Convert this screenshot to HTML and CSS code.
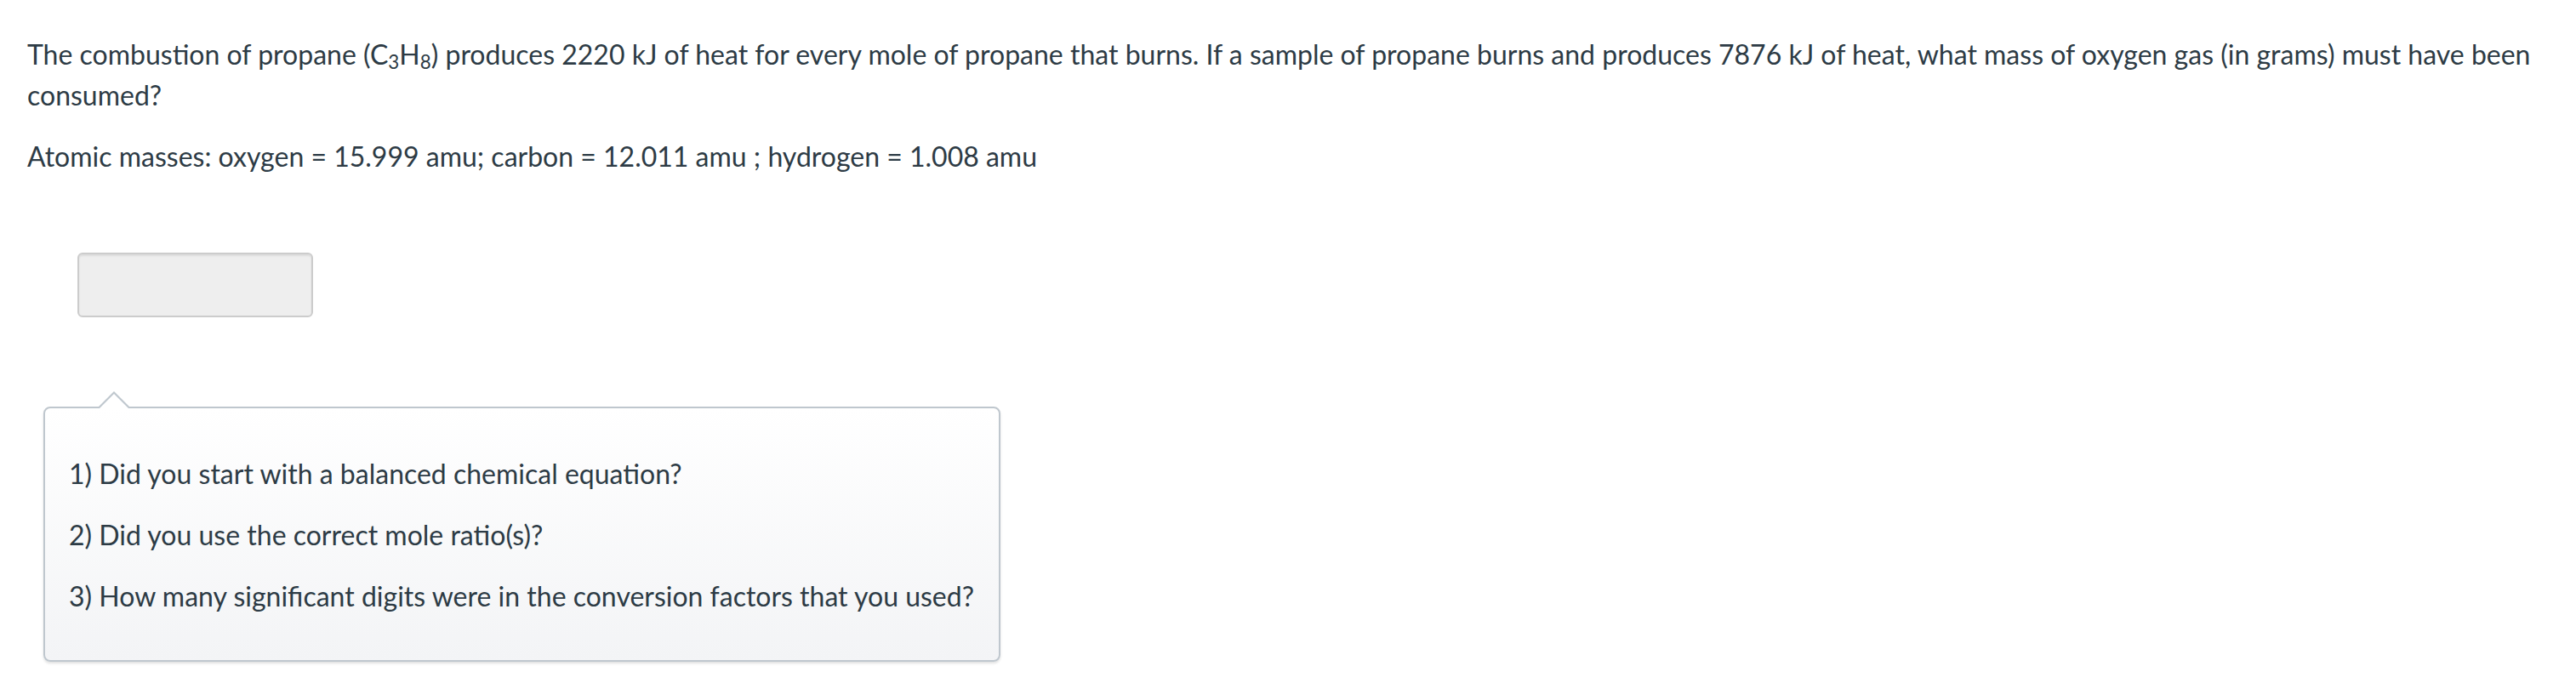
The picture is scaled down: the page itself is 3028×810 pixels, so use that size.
FILE: index.html
```html
<!DOCTYPE html>
<html lang="en">
<head>
    <meta charset="UTF-8">
    <meta name="viewport" content="width=device-width, initial-scale=1.0">
    <title>Quiz Question</title>
    <link rel="stylesheet" href="styles.css">
</head>
<body>
    <div class="question">
        <div class="question-text">
            <p>The combustion of propane (C<sub>3</sub>H<sub>8</sub>) produces 2220 kJ of heat for every mole of propane that burns. If a sample of propane burns and produces 7876 kJ of heat, what mass of oxygen gas (in grams) must have been consumed?</p>
            <p>Atomic masses: oxygen = 15.999 amu; carbon = 12.011 amu ; hydrogen = 1.008 amu</p>
        </div>

        <div class="answers">
            <input class="answer-input" type="text" disabled>
        </div>

        <div class="quiz-comment">
            <p>1) Did you start with a balanced chemical equation?</p>
            <p>2) Did you use the correct mole ratio(s)?</p>
            <p>3) How many significant digits were in the conversion factors that you used?</p>
        </div>
    </div>
</body>
</html>
```

FILE: styles.css
```css
body {
    margin: 0;
    background-color: #fff;
    color: #2d3b45;
    font-family: Lato, "Open Sans", sans-serif;
    font-size: 32px;
    line-height: 48px;
}
.question {
    padding: 40px 32px;
}
.question-text p {
    margin: 0 0 24px;
}
sub {
    font-size: 70%;
    line-height: 0;
    vertical-align: -0.22em;
}
.answers {
    margin: 89px 0 0 59px;
}
.answer-input {
    display: block;
    box-sizing: border-box;
    width: 277px;
    height: 76px;
    margin: 0;
    padding: 8px 12px;
    background-color: #eee;
    border: 2px solid #ccc;
    border-radius: 6px;
    box-shadow: inset 0 2px 2px rgba(0,0,0,0.075);
}
.quiz-comment {
    position: relative;
    box-sizing: border-box;
    width: 1125px;
    margin: 105px 0 0 19px;
    padding: 29px 28px 27px;
    background: linear-gradient(#fff, #f3f4f6);
    border: 2px solid #bfc7ce;
    border-radius: 8px;
    box-shadow: 0 2px 3px rgba(0,0,0,0.12);
}
.quiz-comment p {
    margin: 24px 0;
}
/* little arrow pointing up at the answer */
.quiz-comment::before,
.quiz-comment::after {
    content: "";
    position: absolute;
    left: 62px;
    width: 0;
    height: 0;
    border-style: solid;
    border-color: transparent;
}
.quiz-comment::before {
    top: -20px;
    border-width: 0 19px 19px;
    border-bottom-color: #bfc7ce;
}
.quiz-comment::after {
    top: -17px;
    left: 64px;
    border-width: 0 17px 17px;
    border-bottom-color: #fff;
}
```
